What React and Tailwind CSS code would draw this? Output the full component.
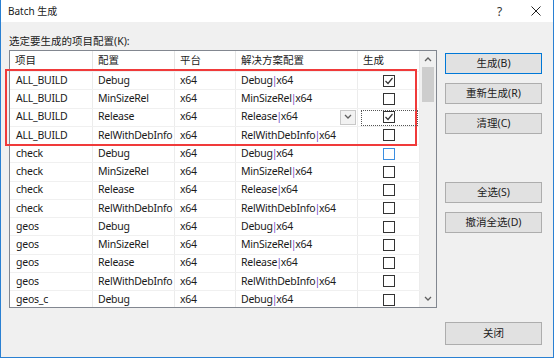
import React from "react";

const rows = [
  ["ALL_BUILD", "Debug", true],
  ["ALL_BUILD", "MinSizeRel", false],
  ["ALL_BUILD", "Release", true],
  ["ALL_BUILD", "RelWithDebInfo", false],
  ["check", "Debug", false],
  ["check", "MinSizeRel", false],
  ["check", "Release", false],
  ["check", "RelWithDebInfo", false],
  ["geos", "Debug", false],
  ["geos", "MinSizeRel", false],
  ["geos", "Release", false],
  ["geos", "RelWithDebInfo", false],
  ["geos_c", "Debug", false],
];

const Checkbox = ({ checked, hover }) => (
  <div
    className={`w-[12px] h-[12px] border bg-white flex items-center justify-center ${
      hover ? "border-[#3c8ee0]" : "border-[#333333]"
    }`}
  >
    {checked && (
      <svg width="10" height="10" viewBox="0 0 10 10">
        <path d="M1.5 5 L4 7.5 L8.5 2" fill="none" stroke="#333" strokeWidth="1.2" />
      </svg>
    )}
  </div>
);

const Button = ({ children, primary, className = "" }) => (
  <div
    className={`w-[97px] h-[21px] flex items-center justify-center bg-[#e1e1e1] border text-[10.5px] text-[#222] ${
      primary ? "border-[#0078d7]" : "border-[#adadad]"
    } ${className}`}
  >
    {children}
  </div>
);

const Chevron = ({ up }) => (
  <svg width="8" height="6" viewBox="0 0 8 6">
    <path
      d={up ? "M1 5 L4 2 L7 5" : "M1 1 L4 4 L7 1"}
      fill="none"
      stroke="#606060"
      strokeWidth="1.3"
    />
  </svg>
);

export default function App() {
  return (
    <div
      className="w-[554px] h-[358px] bg-[#f0f0f0] border-x border-b border-[#2a80d2] flex flex-col text-[#1a1a1a] overflow-hidden"
      style={{ fontFamily: '"Noto Sans", "Noto Sans CJK SC", sans-serif' }}
    >
      {/* title bar */}
      <div className="h-[22px] bg-white flex items-center pl-[7px] text-[10px] relative">
        <span>Batch 生成</span>
        <span className="absolute left-[496px] top-[3px] text-[12px] text-[#333]">?</span>
        <svg className="absolute left-[530px] top-[6px]" width="10" height="10" viewBox="0 0 10 10">
          <path d="M0.5 0.5 L9.5 9.5 M9.5 0.5 L0.5 9.5" stroke="#222" strokeWidth="1" />
        </svg>
      </div>

      <div className="relative flex-1">
        <div className="h-[28px] pl-[8px] pt-[13px] text-[10.5px] leading-[13px]">选定要生成的项目配置(K):</div>

        <div className="flex">
          {/* list */}
          <div className="ml-[8px] w-[428px] h-[258px] border border-[#828790] bg-white flex overflow-hidden">
            <div className="w-[410px] flex flex-col text-[10.5px] tracking-[-0.25px]">
              <div className="h-[20px] flex shrink-0 items-center tracking-normal">
                <div className="w-[83px] h-full pl-[5px] flex items-center border-r border-[#e5e5e5]">项目</div>
                <div className="w-[82px] h-full pl-[5px] flex items-center border-r border-[#e5e5e5]">配置</div>
                <div className="w-[61px] h-full pl-[5px] flex items-center border-r border-[#e5e5e5]">平台</div>
                <div className="w-[122px] h-full pl-[5px] flex items-center border-r border-[#e5e5e5]">解决方案配置</div>
                <div className="w-[62px] h-full pl-[5px] flex items-center border-r border-[#e5e5e5]">生成</div>
              </div>
              {rows.map(([proj, cfg, checked], i) => (
                <div key={i} className="h-[18.25px] flex shrink-0 border-t border-[#f0f0f0]">
                  <div className="w-[83px] pl-[6px] flex items-center border-r border-[#ececec]">{proj}</div>
                  <div className="w-[82px] pl-[5px] flex items-center border-r border-[#ececec] whitespace-nowrap">{cfg}</div>
                  <div className="w-[61px] pl-[5px] flex items-center border-r border-[#ececec]">x64</div>
                  <div className="w-[122px] pl-[5px] flex items-center border-r border-[#ececec] relative">
                    <span>{cfg}</span>
                    <span className="text-[#6f49c4] mx-[-1px]">|</span>
                    <span>x64</span>
                    {i === 2 && (
                      <div className="absolute right-[1px] top-[1px] w-[16px] h-[15px] border border-[#c8c8c8] bg-[#f2f2f2] flex items-center justify-center">
                        <Chevron />
                      </div>
                    )}
                  </div>
                  <div className="w-[62px] flex items-center justify-center border-r border-[#ececec] relative">
                    <Checkbox checked={checked} hover={i === 4} />
                  </div>
                </div>
              ))}
            </div>
            {/* scrollbar */}
            <div className="w-[16px] bg-[#f0f0f0] flex flex-col items-center">
              <div className="h-[16px] flex items-center justify-center">
                <Chevron up />
              </div>
              <div className="w-[12px] h-[35px] bg-[#cdcdcd]" />
              <div className="flex-1" />
              <div className="h-[16px] flex items-center justify-center">
                <Chevron />
              </div>
            </div>
          </div>

          {/* buttons */}
          <div className="ml-[8px] flex flex-col pt-[3px]">
            <Button primary>生成(B)</Button>
            <Button className="mt-[9px]">重新生成(R)</Button>
            <Button className="mt-[9px]">清理(C)</Button>
            <Button className="mt-[48px]">全选(S)</Button>
            <Button className="mt-[9px]">撤消全选(D)</Button>
            <Button className="mt-[89px] h-[23px]">关闭</Button>
          </div>
        </div>

        {/* red highlight and focus rect overlays */}
        <div className="absolute left-[4px] top-[47px] w-[412px] h-[77px] border-2 border-[#f03a3a]" />
        <div className="absolute left-[360px] top-[88px] w-[57px] h-[16px] border border-dotted border-[#555]" />
      </div>
    </div>
  );
}
